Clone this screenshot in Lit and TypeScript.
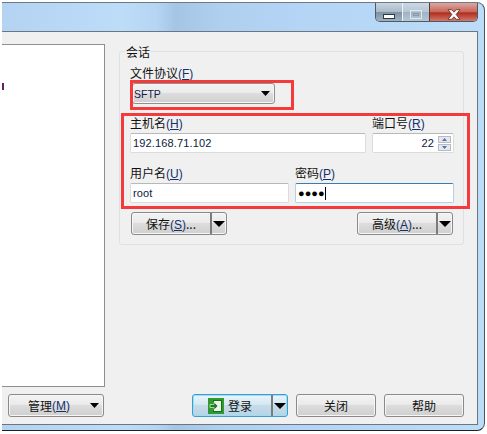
import { LitElement, html, css } from "lit";
import { customElement } from "lit/decorators.js";

const m = (cjk: string, key: string, tail = "") =>
  html`${cjk}<span class="mn">(<u>${key}</u>)</span>${tail}`;

const arrow = html`<svg class="arrow" width="12" height="6" viewBox="0 0 12 6"><path d="M0 0h12L6 6z" fill="#000"/></svg>`;
const smallArrow = (cls: string) => html`<svg class=${cls} width="9" height="5" viewBox="0 0 9 5"><path d="M0 0h9L4.500 5z" fill="#000"/></svg>`;

@customElement("app-root")
export class AppRoot extends LitElement {
  static styles = css`
    :host {
      display: block;
      width: 487px;
      height: 434px;
      overflow: hidden;
      background: #fff;
      position: relative;
      font: 12px "Noto Sans CJK SC", "Liberation Sans", sans-serif;
      color: #111;
    }
    .window {
      box-sizing: border-box;
      width: 483px;
      height: 429px;
      margin: 2px 0 0 2px;
      padding: 0 6px 5px 0;
      display: flex;
      flex-direction: column;
      border-top: 1px solid #6a7a8a;
      border-right: 1px solid #4a5560;
      border-bottom: 1px solid #222;
      border-radius: 0 8px 8px 0;
      background: linear-gradient(90deg, #b4d3f2 0, #bddcf8 25%, #b5d5f3 32%, #a4c5e4 36%, #aecfee 45%, #b3d4f4 60%, #bcdcf8 100%);
    }
    .title {
      height: 28px;
      flex: none;
      display: flex;
      justify-content: flex-end;
      align-items: flex-start;
    }
    .caption {
      display: flex;
      height: 18px;
      border: 1px solid #4c5a68;
      border-top: 0;
      border-radius: 0 0 5px 5px;
      overflow: hidden;
    }
    .cap {
      display: flex;
      align-items: center;
      justify-content: center;
      height: 100%;
    }
    .min {
      width: 26px;
      border-right: 1px solid #eef3f8;
      background: linear-gradient(#c9d4df, #a9b9c8 50%, #7e92a4 52%, #9fb1c0);
    }
    .min svg { margin-top: 9px; }
    .max {
      width: 26px;
      border-right: 1px solid #5a3a36;
      background: linear-gradient(#ccd8e3, #b7c7d6 50%, #a0b3c4 52%, #b6c6d4);
    }
    .max svg { margin-top: 5px; }
    .close {
      width: 47px;
      background: linear-gradient(#dca79f, #c9685a 48%, #b02d1e 55%, #d2796a);
    }
    .close svg { margin-top: 5px; }
    .body {
      flex: 1;
      min-height: 0;
      background: #f0f0f0;
      border: 1px solid #6d7680;
      border-left: 0;
      display: grid;
      grid-template-columns: 103px 1fr;
      grid-template-rows: 343px auto;
      column-gap: 14px;
      row-gap: 7px;
      padding: 12px 13px 7px 0;
    }
    .tree {
      background: #fff;
      border: 1px solid #8b9096;
      border-width: 1px 1px 1px 0;
      position: relative;
      box-sizing: border-box;
    }
    .tree i {
      position: absolute;
      left: 0;
      top: 38px;
      width: 2px;
      height: 7px;
      background: #6a1a6a;
    }
    .group {
      align-self: start;
      margin-top: 7px;
      position: relative;
      border: 1px solid #dce1e6;
      border-radius: 3px;
      padding: 14px 9px 9px 10px;
      display: flex;
      flex-direction: column;
      box-sizing: border-box;
      height: 194px;
    }
    .legend {
      position: absolute;
      left: 5px;
      top: -7px;
      padding: 0 1px;
      background: #f0f0f0;
      line-height: 14px;
    }
    .lbl {
      line-height: 14px;
      height: 14px;
      white-space: nowrap;
    }
    .mn {
      font: 12px "Liberation Sans", sans-serif;
      color: #14306a;
    }
    .combo {
      box-sizing: border-box;
      flex: none;
      width: 143px;
      height: 21px;
      margin: 3px 0 0 2px;
      border: 1px solid #8e8f8f;
      border-radius: 3px;
      background: linear-gradient(#f2f2f2 0, #ebebeb 45%, #dddddd 48%, #cfcfcf 100%);
      box-shadow: inset 0 0 0 1px #f6f6f6;
      display: flex;
      align-items: center;
      justify-content: space-between;
      padding: 0 4px 0 1px;
      font: 10.500px "Liberation Sans", sans-serif;
      color: #10204a;
    }
    .hostport {
      display: grid;
      grid-template-columns: 236px 82px;
      column-gap: 6px;
      margin-top: 12px;
    }
    .userpass {
      display: grid;
      grid-template-columns: 159px 159px;
      column-gap: 6px;
      margin-top: 13px;
    }
    .input {
      box-sizing: border-box;
      height: 20px;
      margin-top: 3px;
      background: #fff;
      border: 1px solid #dcdcdc;
      border-top-color: #b8b8b8;
      border-radius: 2px;
      display: flex;
      align-items: center;
      padding: 0 2px;
      font: 11px "Liberation Sans", sans-serif;
      letter-spacing: 0.15px;
      color: #0c1a3c;
      white-space: nowrap;
    }
    .input.num { justify-content: flex-end; gap: 4px; }
    .input.focus { border-color: #b5cfe7; border-top-color: #3d7bad; letter-spacing: 0; }
    .caret { width: 1px; height: 13px; background: #000; }
    .dots { color: #000; }
    .spin { display: flex; flex-direction: column; gap: 1px; }
    .spin svg { display: block; }
    .btns {
      display: flex;
      justify-content: space-between;
      margin-top: 9px;
      padding: 0 1px;
    }
    .btn {
      box-sizing: border-box;
      height: 23px;
      border: 1px solid #8a8a8a;
      border-radius: 3px;
      background: linear-gradient(#f3f3f3 0, #ebebeb 45%, #dddddd 48%, #cfcfcf 100%);
      box-shadow: inset 0 0 0 1px #f6f6f6;
      display: flex;
      align-items: center;
      justify-content: center;
      white-space: nowrap;
      color: #111;
    }
    .split { padding: 0; width: 96px; }
    .split .main { flex: 1; text-align: center; }
    .split .sep { width: 2px; height: 100%; background: #7c7c7c; }
    .split .drop { width: 14px; display: flex; align-items: center; justify-content: center; }
    .footer {
      grid-column: 1 / 3;
      display: flex;
      align-items: center;
      padding-left: 6px;
    }
    .manage { width: 96px; position: relative; justify-content: flex-start; padding-left: 19px; }
    .manage .marrow { position: absolute; right: 4px; top: 8px; }
    .login {
      margin-left: 88px;
      border-color: #3c9dd0;
      background: linear-gradient(#e9f4fa 0, #d5e8f2 45%, #c4dcea 50%, #b9d3e2 100%);
      box-shadow: inset 0 0 0 1px #9ddcf3;
    }
    .login .main { display: flex; align-items: center; gap: 4px; padding-left: 15px; }
    .plain { width: 80px; margin-left: 8px; }
    .mark {
      position: absolute;
      box-sizing: border-box;
      border: 3px solid #f43a3a;
      pointer-events: none;
    }
    .m1 { left: 130px; top: 80px; width: 164px; height: 30px; }
    .m2 { left: 121px; top: 113px; width: 349px; height: 96px; }
  `;

  render() {
    return html`
      <div class="window">
        <div class="title">
          <div class="caption">
            <div class="cap min">
              <svg width="12" height="5" viewBox="0 0 12 5"><rect x=".5" y=".5" width="11" height="4" fill="#fff" stroke="#2c3a48"/></svg>
            </div>
            <div class="cap max">
              <svg width="12" height="9" viewBox="0 0 12 9"><rect x=".5" y=".5" width="11" height="8" fill="none" stroke="#dfe7ee"/><rect x="3.500" y="3.500" width="5" height="2" fill="none" stroke="#8899a8"/></svg>
            </div>
            <div class="cap close">
              <svg width="14" height="11" viewBox="0 0 14 11"><path d="M1 .7h3.600L7 3.200 9.400 .7H13L9.100 5.500 13 10.300H9.400L7 7.800 4.600 10.300H1L4.900 5.500z" fill="#fff" stroke="#5c2a26" stroke-width=".8"/></svg>
            </div>
          </div>
        </div>
        <div class="body">
          <div class="tree"><i></i></div>
          <div class="group">
            <div class="legend">会话</div>
            <div class="lbl">${m("文件协议", "F")}</div>
            <div class="combo"><span>SFTP</span>${smallArrow("carrow")}</div>
            <div class="hostport">
              <div>
                <div class="lbl">${m("主机名", "H")}</div>
                <div class="input">192.168.71.102</div>
              </div>
              <div>
                <div class="lbl">${m("端口号", "R")}</div>
                <div class="input num">22
                  <span class="spin">
                    <svg width="13" height="7" viewBox="0 0 13 7"><rect x=".5" y=".5" width="12" height="6" fill="#e4e8ee" stroke="#b6bcc4"/><path d="M6.500 2l2.500 3H4z" fill="#5a6fa8"/></svg>
                    <svg width="13" height="7" viewBox="0 0 13 7"><rect x=".5" y=".5" width="12" height="6" fill="#e4e8ee" stroke="#b6bcc4"/><path d="M6.500 5L9 2H4z" fill="#5a6fa8"/></svg>
                  </span>
                </div>
              </div>
            </div>
            <div class="userpass">
              <div>
                <div class="lbl">${m("用户名", "U")}</div>
                <div class="input">root</div>
              </div>
              <div>
                <div class="lbl">${m("密码", "P")}</div>
                <div class="input focus"><span class="dots">●●●●</span><span class="caret"></span></div>
              </div>
            </div>
            <div class="btns">
              <div class="btn split">
                <span class="main">${m("保存", "S", "...")}</span><span class="sep"></span><span class="drop">${arrow}</span>
              </div>
              <div class="btn split">
                <span class="main">${m("高级", "A", "...")}</span><span class="sep"></span><span class="drop">${arrow}</span>
              </div>
            </div>
          </div>
          <div class="footer">
            <div class="btn manage">${m("管理", "M")}${smallArrow("marrow")}</div>
            <div class="btn split login">
              <span class="main">
                <svg width="16" height="16" viewBox="0 0 16 16"><rect width="16" height="16" fill="#2f9b2f"/><rect x="5.500" y="2.500" width="8" height="11" fill="#e8f6e8" stroke="#1d6e1d"/><path d="M2 6.500h4V4l4 4-4 4V9.500H2z" fill="#1f7f1f" stroke="#fff" stroke-width=".6"/></svg>
                登录
              </span>
              <span class="sep"></span><span class="drop">${arrow}</span>
            </div>
            <div class="btn plain">关闭</div>
            <div class="btn plain">帮助</div>
          </div>
        </div>
      </div>
      <div class="mark m1"></div>
      <div class="mark m2"></div>
    `;
  }
}
